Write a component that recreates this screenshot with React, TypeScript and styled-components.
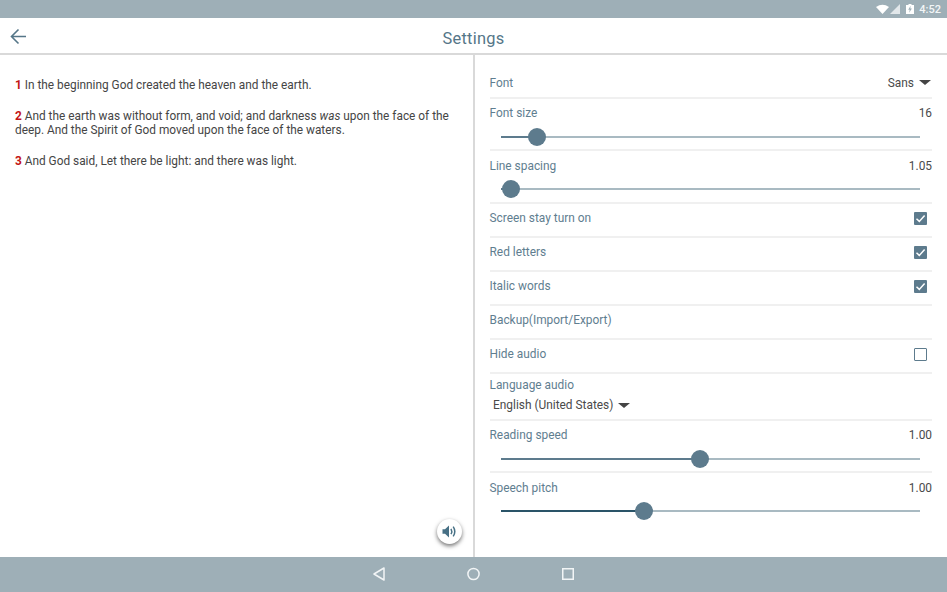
import React from 'react';
import styled, { createGlobalStyle } from 'styled-components';

const GlobalStyle = createGlobalStyle`
  html, body {
    margin: 0;
    padding: 0;
    background: #ffffff;
    font-family: Roboto, 'Liberation Sans', sans-serif;
  }
  * { box-sizing: border-box; }
`;

const Screen = styled.div`
  width: 947px;
  height: 592px;
  display: flex;
  flex-direction: column;
  overflow: hidden;
`;

const StatusBar = styled.div`
  height: 18px;
  background: #9eafb7;
  display: flex;
  align-items: center;
  justify-content: flex-end;
  gap: 5px;
  padding-right: 6px;
  color: #f2f5f6;
  font-size: 11px;
  font-weight: 500;
  flex-shrink: 0;
`;

const Toolbar = styled.div`
  height: 37px;
  display: flex;
  align-items: center;
  justify-content: center;
  position: relative;
  border-bottom: 2px solid #d9d9d9;
  flex-shrink: 0;
  padding-top: 5px;
`;

const BackButton = styled.div`
  position: absolute;
  left: 10px;
  top: 10px;
  width: 17px;
  height: 17px;
  display: flex;
`;

const Title = styled.div`
  font-size: 16.4px;
  color: #557688;
  letter-spacing: 0.3px;
`;

const Content = styled.div`
  flex: 1;
  display: flex;
  min-height: 0;
`;

const ReadingPane = styled.div`
  width: 473px;
  padding: 23px 15px 0;
  position: relative;
  flex-shrink: 0;
`;

const Verse = styled.p`
  margin: 0 0 17px;
  font-size: 11.85px;
  line-height: 14px;
  color: #454545;
`;

const VerseNumber = styled.b`
  color: #c31414;
  font-weight: 700;
`;

const AudioButton = styled.div`
  position: absolute;
  left: 437px;
  top: 464px;
  width: 25px;
  height: 25px;
  border-radius: 50%;
  background: #ffffff;
  box-shadow: 0 2px 4px rgba(0, 0, 0, 0.55);
  display: flex;
  align-items: center;
  justify-content: center;
`;

const SettingsPane = styled.div`
  flex: 1;
  border-left: 2px solid #d9d9d9;
  padding: 11px 15px 0 14.5px;
`;

const Row = styled.div`
  height: 34px;
  border-bottom: 2px solid #f0f0f0;
  padding-bottom: 3px;
  display: flex;
  align-items: center;
  justify-content: space-between;
  font-size: 11.9px;
  color: #5f7e90;
`;

const FontRow = styled(Row)`
  height: 32.5px;
  padding: 3px 0 0;
`;

const SliderRow = styled.div`
  height: 52.5px;
  border-bottom: 2px solid #f0f0f0;
  padding-top: 7.5px;
  font-size: 11.9px;
  color: #5f7e90;

  &:last-child {
    border-bottom: none;
  }
`;

const SliderHead = styled.div`
  display: flex;
  justify-content: space-between;
  line-height: 15px;
`;

const Value = styled.span`
  color: #4a4a4a;
`;

const Track = styled.div`
  position: relative;
  height: 2px;
  margin: 14.5px 12.5px 0 11.5px;
  background: #a9bac2;
`;

const TrackFill = styled.div<{ $dark?: boolean }>`
  position: absolute;
  left: 0;
  top: 0;
  height: 2px;
  background: ${p => (p.$dark ? '#2a5468' : '#5d7b8d')};
`;

const Thumb = styled.div`
  position: absolute;
  top: -8px;
  width: 18px;
  height: 18px;
  margin-left: -9px;
  border-radius: 50%;
  background: #5d7b8d;
`;

const Select = styled.div`
  display: flex;
  align-items: center;
  gap: 5px;
  color: #4a4a4a;
`;

const Caret = styled.span`
  width: 0;
  height: 0;
  margin-right: 1px;
  border-left: 6px solid transparent;
  border-right: 6px solid transparent;
  border-top: 5px solid #444444;
`;

const CheckBox = styled.div<{ $checked: boolean }>`
  width: 13px;
  height: 13px;
  margin-right: 5px;
  border-radius: 1px;
  background: ${p => (p.$checked ? '#5d7b8d' : '#ffffff')};
  border: ${p => (p.$checked ? 'none' : '1.5px solid #5d7b8d')};
  display: flex;
  align-items: center;
  justify-content: center;
`;

const LanguageRow = styled.div`
  height: 47px;
  border-bottom: 2px solid #f0f0f0;
  padding-top: 4.5px;
  font-size: 11.9px;
  color: #5f7e90;
  line-height: 15px;
`;

const LanguageSelect = styled(Select)`
  margin: 5px 0 0 3.5px;
`;

const NavBar = styled.div`
  height: 35px;
  background: #9eafb7;
  display: flex;
  align-items: center;
  justify-content: center;
  gap: 75px;
  padding: 0 1px 1px 0;
  flex-shrink: 0;
`;

const NavIcon = styled.svg`
  width: 20px;
  height: 20px;
  display: block;
`;

const sliders = {
  fontSize: { label: 'Font size', value: '16', pos: 36 },
  lineSpacing: { label: 'Line spacing', value: '1.05', pos: 9.5 },
  speed: { label: 'Reading speed', value: '1.00', pos: 199 },
  pitch: { label: 'Speech pitch', value: '1.00', pos: 143, dark: true },
};

const Slider = ({ label, value, pos, dark }: { label: string; value: string; pos: number; dark?: boolean }) => (
  <SliderRow>
    <SliderHead>
      <span>{label}</span>
      <Value>{value}</Value>
    </SliderHead>
    <Track>
      <TrackFill $dark={dark} style={{ width: pos }} />
      <Thumb style={{ left: pos }} />
    </Track>
  </SliderRow>
);

const CheckRow = ({ label, checked }: { label: string; checked: boolean }) => (
  <Row>
    <span>{label}</span>
    <CheckBox $checked={checked}>
      {checked && (
        <svg width="11" height="11" viewBox="0 0 11 11" fill="none">
          <path d="M1.5 5.8 L4.3 8.4 L9.6 2.6" stroke="#ffffff" strokeWidth="1.5" />
        </svg>
      )}
    </CheckBox>
  </Row>
);

export default function App() {
  return (
    <Screen>
      <GlobalStyle />
      <StatusBar>
        <svg width="38" height="12" viewBox="0 0 38 12">
          <path d="M0 4 Q6.5 -0.5 13 4 L6.5 11 Z" fill="#ffffff" />
          <path d="M14 11 L24 1 V11 Z" fill="#ffffff" opacity="0.7" />
          <path d="M30 2 H32.5 V1 H35.5 V2 H38 V11 H30 Z" fill="#ffffff" />
          <path d="M34.6 2.8 L32.2 6.8 H33.7 L33.2 9.8 L35.9 5.6 H34.3 Z" fill="#9eafb7" />
        </svg>
        4:52
      </StatusBar>
      <Toolbar>
        <BackButton>
          <svg width="17" height="17" viewBox="0 0 17 17" fill="none">
            <path d="M16 8.5 H1.5 M8.5 1.5 L1.5 8.5 L8.5 15.5" stroke="#557688" strokeWidth="1.6" />
          </svg>
        </BackButton>
        <Title>Settings</Title>
      </Toolbar>
      <Content>
        <ReadingPane>
          <Verse>
            <VerseNumber>1</VerseNumber> In the beginning God created the heaven and the earth.
          </Verse>
          <Verse>
            <VerseNumber>2</VerseNumber> And the earth was without form, and void; and darkness <i>was</i> upon the face of the
            deep. And the Spirit of God moved upon the face of the waters.
          </Verse>
          <Verse>
            <VerseNumber>3</VerseNumber> And God said, Let there be light: and there was light.
          </Verse>
          <AudioButton>
            <svg width="15" height="13" viewBox="0 0 15 13" fill="none">
              <path d="M0.5 4.2 H3 L7 0.5 V12.5 L3 8.8 H0.5 Z" fill="#477085" />
              <path d="M9 3.8 Q10.6 6.5 9 9.2" stroke="#477085" strokeWidth="1.5" />
              <path d="M11.2 1.6 Q14.4 6.5 11.2 11.4" stroke="#477085" strokeWidth="1.5" />
            </svg>
          </AudioButton>
        </ReadingPane>
        <SettingsPane>
          <FontRow>
            <span>Font</span>
            <Select>
              <span>Sans</span>
              <Caret />
            </Select>
          </FontRow>
          <Slider {...sliders.fontSize} />
          <Slider {...sliders.lineSpacing} />
          <CheckRow label="Screen stay turn on" checked />
          <CheckRow label="Red letters" checked />
          <CheckRow label="Italic words" checked />
          <Row>
            <span>Backup(Import/Export)</span>
          </Row>
          <CheckRow label="Hide audio" checked={false} />
          <LanguageRow>
            Language audio
            <LanguageSelect>
              <span>English (United States)</span>
              <Caret />
            </LanguageSelect>
          </LanguageRow>
          <Slider {...sliders.speed} />
          <Slider {...sliders.pitch} />
        </SettingsPane>
      </Content>
      <NavBar>
        <NavIcon viewBox="0 0 20 20" fill="none">
          <path d="M16 4 L6 10 L16 16 Z" stroke="#f2f5f6" strokeWidth="1.5" strokeLinejoin="round" />
        </NavIcon>
        <NavIcon viewBox="0 0 20 20" fill="none">
          <circle cx="10.5" cy="10" r="5.6" stroke="#f2f5f6" strokeWidth="1.5" />
        </NavIcon>
        <NavIcon viewBox="0 0 20 20" fill="none">
          <rect x="4.75" y="4.75" width="10.5" height="10.5" stroke="#f2f5f6" strokeWidth="1.5" />
        </NavIcon>
      </NavBar>
    </Screen>
  );
}
